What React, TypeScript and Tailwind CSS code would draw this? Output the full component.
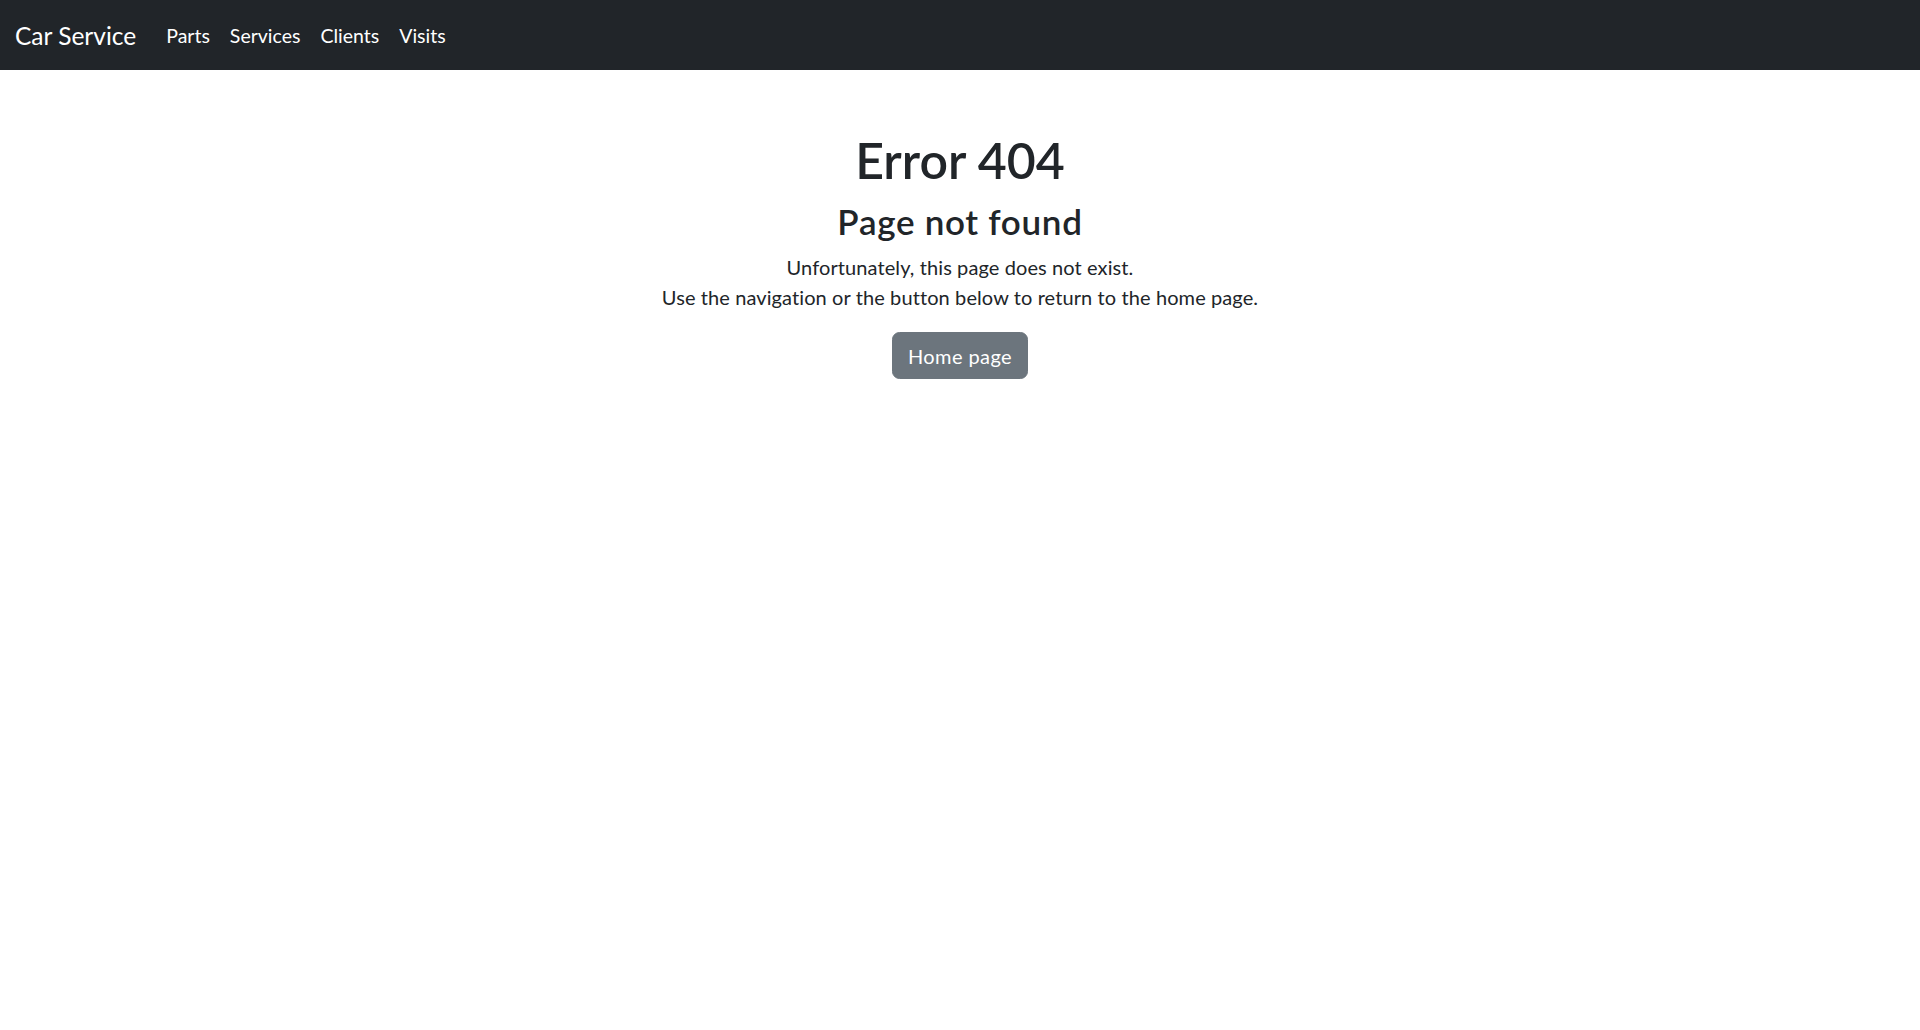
export default function App() {
  const font = { fontFamily: 'Lato, "Open Sans", sans-serif' };
  return (
    <div className="min-h-screen bg-white" style={font}>
      <nav className="bg-[#212529] h-[70px] flex items-center px-[15px] pt-[2px]">
        <a href="#" className="text-[24.5px] leading-[37.5px] py-[6px] text-white mr-[20px]">
          Car Service
        </a>
        <ul className="flex">
          {["Parts", "Services", "Clients", "Visits"].map((l) => (
            <li key={l}>
              <a href="#" className="block px-[10px] py-[10px] text-[19.5px] leading-[30px] text-white">
                {l}
              </a>
            </li>
          ))}
        </ul>
      </nav>
      <main className="text-center mt-[60px] text-[#212529]">
        <h1 className="text-[50px] leading-[60px] font-semibold mb-[10px]">Error 404</h1>
        <h3 className="text-[35px] leading-[42px] font-semibold tracking-[0.7px] mb-[10px]">Page not found</h3>
        <p className="text-[20px] leading-[30px] tracking-[0.1px] mb-[20px]">
          Unfortunately, this page does not exist.
          <br />
          Use the navigation or the button below to return to the home page.
        </p>
        <a
          href="#"
          className="inline-block bg-[#6c757d] border border-[#6c757d] text-white text-[20px] leading-[30px] tracking-[0.4px] px-[15px] py-[7.5px] rounded-[7.5px]"
        >
          Home page
        </a>
      </main>
    </div>
  );
}
